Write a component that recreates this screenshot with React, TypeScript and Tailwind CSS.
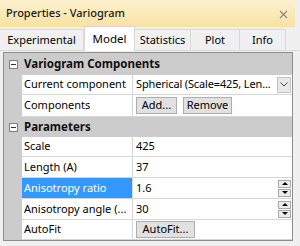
import React from "react";

const tabs = [
  { name: "Experimental", w: "w-[84px]" },
  { name: "Model", w: "w-[51px]", active: true },
  { name: "Statistics", w: "w-[56px]" },
  { name: "Plot", w: "w-[49px]" },
  { name: "Info", w: "w-[46px]" },
];

function Minus() {
  return (
    <div className="flex h-[9px] w-[9px] items-center justify-center border border-[#808080] bg-white">
      <div className="h-px w-[5px] bg-[#333]" />
    </div>
  );
}

function Category({ title, h }: { title: string; h: string }) {
  return (
    <div className={`flex ${h} items-center bg-[#cccccc]`}>
      <div className="flex w-[18px] shrink-0 justify-center pl-[1px]">
        <Minus />
      </div>
      <span className="pl-[2px] text-[11.5px] font-bold text-[#111]">{title}</span>
    </div>
  );
}

function Spinner() {
  return (
    <div className="flex shrink-0 flex-col gap-px">
      <div className="flex h-[8px] w-[13px] items-center justify-center border border-[#a9a9a9] bg-[#ececec]">
        <div className="h-0 w-0 border-x-[3px] border-b-[3px] border-x-transparent border-b-black" />
      </div>
      <div className="flex h-[8px] w-[13px] items-center justify-center border border-[#a9a9a9] bg-[#ececec]">
        <div className="h-0 w-0 border-x-[3px] border-t-[3px] border-x-transparent border-t-black" />
      </div>
    </div>
  );
}

function Btn({ label, w }: { label: string; w: string }) {
  return (
    <div className={`flex h-[17px] ${w} shrink-0 items-center justify-center border border-[#adadad] bg-[#e1e1e1]`}>
      {label}
    </div>
  );
}

function Row({
  label,
  h,
  selected,
  children,
}: {
  label: string;
  h: string;
  selected?: boolean;
  children?: React.ReactNode;
}) {
  return (
    <div className={`flex ${h}`}>
      <div className="w-[18px] shrink-0 bg-[#cccccc]" />
      <div
        className={`flex w-[111px] shrink-0 items-center border-b border-r border-[#d6d6d6] pl-[2px] ${
          selected ? "bg-[#3399ff] text-white" : "bg-white"
        }`}
      >
        <span className="whitespace-nowrap">{label}</span>
      </div>
      <div className="flex min-w-0 flex-1 items-center gap-[6px] border-b border-[#d6d6d6] bg-white pl-[3px] pr-[1px]">
        {children}
      </div>
    </div>
  );
}

export default function App() {
  return (
    <div className="flex h-[246px] w-[300px] flex-col overflow-hidden bg-[#f0f0f0] font-['Noto_Sans',sans-serif] text-[11px] text-black">
      <div className="flex h-[27px] w-[295px] shrink-0 items-center justify-between bg-gradient-to-b from-[#fcf1cf] to-[#f8e2a2] pl-[6px] pr-[7px]">
        <span className="font-medium text-[#1a1a1a]">Properties - Variogram</span>
        <svg width="9" height="9" viewBox="0 0 9 9" className="mt-[2px]">
          <path d="M1 1 L8 8 M8 1 L1 8" stroke="#8a8a8a" strokeWidth="1.2" />
        </svg>
      </div>

      <div className="flex h-[24px] shrink-0 items-end border-b border-[#d9d9d9]">
        {tabs.map((t) =>
          t.active ? (
            <div
              key={t.name}
              className={`-mb-px flex h-[25px] ${t.w} items-center justify-center border-x border-t border-[#d9d9d9] bg-white text-[11.5px]`}
            >
              {t.name}
            </div>
          ) : (
            <div
              key={t.name}
              className={`flex h-[21px] ${t.w} items-center justify-center border-r border-t border-[#d9d9d9] bg-[#f0f0f0]`}
            >
              {t.name}
            </div>
          )
        )}
      </div>

      <div className="ml-[3px] mt-[1px] flex w-[290px] flex-col border border-[#8e8f8f] bg-[#cccccc]">
        <Category title="Variogram Components" h="h-[22px]" />
        <Row label="Current component" h="h-[20px]">
          <span className="shrink-0 whitespace-nowrap tracking-[-0.15px]">Spherical (Scale=425, Len...</span>
          <div className="ml-auto flex h-[16px] w-[14px] shrink-0 items-center justify-center border border-[#c4c4c4] bg-[#e8e8e8]">
            <svg width="8" height="5" viewBox="0 0 8 5">
              <path d="M0.5 0.5 L4 4 L7.5 0.5" fill="none" stroke="#444" strokeWidth="1" />
            </svg>
          </div>
        </Row>
        <Row label="Components" h="h-[22px]">
          <Btn label="Add..." w="w-[41px]" />
          <Btn label="Remove" w="w-[49px]" />
        </Row>
        <Category title="Parameters" h="h-[20px]" />
        <Row label="Scale" h="h-[20px]">
          <span>425</span>
        </Row>
        <Row label="Length (A)" h="h-[21px]">
          <span>37</span>
        </Row>
        <Row label="Anisotropy ratio" h="h-[21px]" selected>
          <span className="flex-1">1.6</span>
          <Spinner />
        </Row>
        <Row label="Anisotropy angle (..." h="h-[21px]">
          <span className="flex-1">30</span>
          <Spinner />
        </Row>
        <Row label="AutoFit" h="h-[20px]">
          <Btn label="AutoFit..." w="w-[59px]" />
        </Row>
      </div>
    </div>
  );
}
